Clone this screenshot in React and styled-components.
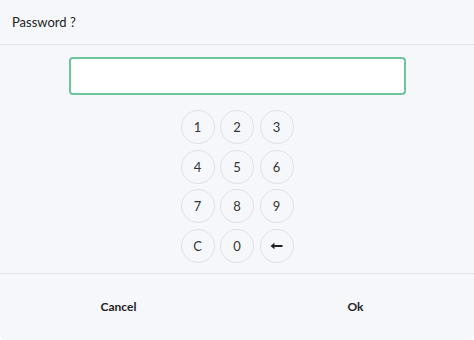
import React, { useState } from "react";
import styled, { createGlobalStyle } from "styled-components";

const Global = createGlobalStyle`
  html, body { margin: 0; padding: 0; background: #ffffff; }
  body { font-family: "Lato", "Noto Sans", sans-serif; }
`;

const Dialog = styled.div`
  width: 474px;
  height: 340px;
  box-sizing: border-box;
  background: #f6f7fa;
  display: flex;
  flex-direction: column;
  border-radius: 0 0 6px 6px;
  overflow: hidden;
`;

const Header = styled.div`
  height: 45px;
  box-sizing: border-box;
  border-bottom: 1px solid #e2e3e7;
  display: flex;
  align-items: center;
  padding: 0 12px 1px;
  font-size: 13px;
  color: #222;
`;

const Body = styled.div`
  display: flex;
  flex-direction: column;
  align-items: center;
  padding-top: 12px;
  height: 229px;
  box-sizing: border-box;
  border-bottom: 1px solid #e2e3e7;
`;

const Input = styled.input`
  width: 337px;
  height: 38px;
  box-sizing: border-box;
  border: 2px solid #6cc59b;
  border-radius: 4px;
  background: #ffffff;
  outline: none;
  font-size: 14px;
  padding: 0 8px;
`;

const Pad = styled.div`
  margin-top: 15px;
  display: grid;
  grid-template-columns: repeat(3, 34px);
  grid-auto-rows: 34px;
  column-gap: 5.5px;
  row-gap: 5.5px;
`;

const Key = styled.button`
  width: 34px;
  height: 34px;
  border-radius: 50%;
  border: 1px solid #e0e1e5;
  background: transparent;
  padding: 0;
  display: flex;
  align-items: center;
  justify-content: center;
  font-family: "Lato", "Noto Sans", sans-serif;
  font-size: 13px;
  color: #333;
  cursor: pointer;
`;

const Footer = styled.div`
  flex: 1;
  display: grid;
  grid-template-columns: 1fr 1fr;
`;

const Action = styled.button`
  background: transparent;
  border: none;
  font-family: "Lato", "Noto Sans", sans-serif;
  font-size: 12px;
  font-weight: 700;
  color: #222;
  padding: 0 0 2px;
  cursor: pointer;
`;

const Back = () => (
  <svg width="13" height="8" viewBox="0 0 13 8">
    <path d="M0.5 4 L4.5 0.8 L4.5 3 L12.5 3 L12.5 5 L4.5 5 L4.5 7.2 Z" fill="#222" />
  </svg>
);

export default function App() {
  const [val, setVal] = useState("");
  const keys = ["1", "2", "3", "4", "5", "6", "7", "8", "9", "C", "0", "back"];
  const press = (k) => {
    if (k === "C") setVal("");
    else if (k === "back") setVal((v) => v.slice(0, -1));
    else setVal((v) => v + k);
  };
  return (
    <>
      <Global />
      <Dialog>
        <Header>Password ?</Header>
        <Body>
          <Input type="password" value={val} onChange={(e) => setVal(e.target.value)} />
          <Pad>
            {keys.map((k) => (
              <Key key={k} onClick={() => press(k)}>
                {k === "back" ? <Back /> : k}
              </Key>
            ))}
          </Pad>
        </Body>
        <Footer>
          <Action>Cancel</Action>
          <Action>Ok</Action>
        </Footer>
      </Dialog>
    </>
  );
}
